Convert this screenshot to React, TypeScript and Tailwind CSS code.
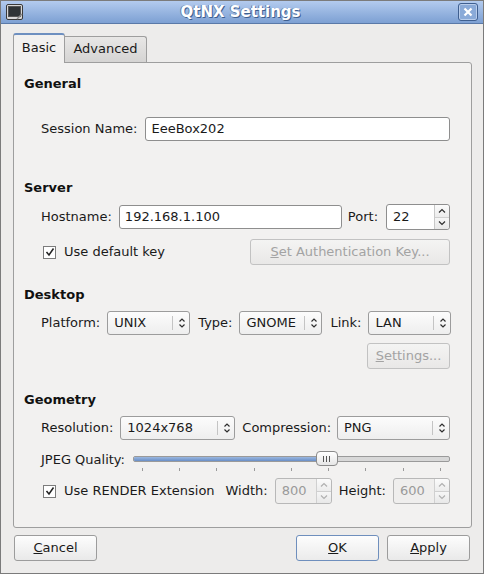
import type { ReactNode } from "react";

// Small up/down chevron used in combo boxes
function UpDown() {
  return (
    <svg width="8" height="12" viewBox="0 0 8 12" className="text-[#2e2e2e]">
      <path d="M1.5 4.5 L4 2 L6.5 4.5" fill="none" stroke="currentColor" strokeWidth="1.2" />
      <path d="M1.5 7.5 L4 10 L6.5 7.5" fill="none" stroke="currentColor" strokeWidth="1.2" />
    </svg>
  );
}

function Combo({ value, width }: { value: string; width: string }) {
  return (
    <div
      className={`${width} h-[24px] flex items-stretch rounded-[3px] border border-[#9c9c9c] bg-gradient-to-b from-[#fcfcfc] to-[#eeeeee] shrink-0`}
    >
      <div className="flex-1 flex items-center pl-[6px] text-[#1a1a1a]">{value}</div>
      <div className="w-[20px] flex items-center justify-center">
        <div className="w-px h-[14px] bg-[#c4c4c4] mr-[5px]" />
        <UpDown />
      </div>
    </div>
  );
}

function SpinBox({ value, width, disabled }: { value: string; width: string; disabled?: boolean }) {
  const stroke = disabled ? "#b0b0b0" : "#2e2e2e";
  return (
    <div
      className={`${width} h-[26px] flex items-stretch rounded-[3px] border ${
        disabled ? "border-[#b8b8b8] bg-[#efeeed] text-[#9a9a9a]" : "border-[#8e8e8e] bg-white text-[#1a1a1a]"
      } shrink-0`}
    >
      <div className="flex-1 flex items-center pl-[6px]">{value}</div>
      <div className={`w-[15px] flex flex-col border-l ${disabled ? "border-[#d0d0d0]" : "border-[#c8c8c8]"}`}>
        <div className="flex-1 flex items-center justify-center border-b border-[#d0d0d0] bg-gradient-to-b from-[#fbfbfb] to-[#ececec] rounded-tr-[3px]">
          <svg width="8" height="6" viewBox="0 0 8 6">
            <path d="M1 4.5 L4 1.5 L7 4.5" fill="none" stroke={stroke} strokeWidth="1.2" />
          </svg>
        </div>
        <div className="flex-1 flex items-center justify-center bg-gradient-to-b from-[#f6f6f6] to-[#e8e8e8] rounded-br-[3px]">
          <svg width="8" height="6" viewBox="0 0 8 6">
            <path d="M1 1.5 L4 4.5 L7 1.5" fill="none" stroke={stroke} strokeWidth="1.2" />
          </svg>
        </div>
      </div>
    </div>
  );
}

function Input({ value, className }: { value: string; className?: string }) {
  return (
    <div
      className={`h-[24px] flex items-center pl-[5px] rounded-[3px] border border-[#8e8e8e] bg-white text-[#1a1a1a] ${className ?? ""}`}
    >
      {value}
    </div>
  );
}

function Button({
  children,
  width,
  disabled,
  isDefault,
}: {
  children: ReactNode;
  width: string;
  disabled?: boolean;
  isDefault?: boolean;
}) {
  return (
    <div
      className={`${width} h-[26px] flex items-center justify-center rounded-[3px] border shrink-0 ${
        disabled
          ? "border-[#c2c2c2] bg-gradient-to-b from-[#f4f4f3] to-[#e9e8e7] text-[#a3a3a3]"
          : isDefault
          ? "border-[#6f8fbd] bg-gradient-to-b from-[#fdfdfd] to-[#ebebeb] text-[#1a1a1a]"
          : "border-[#9c9c9c] bg-gradient-to-b from-[#fdfdfd] to-[#e9e9e9] text-[#1a1a1a]"
      }`}
    >
      {children}
    </div>
  );
}

function Check({ label }: { label: string }) {
  return (
    <div className="flex items-center gap-[8px] pl-[2px]">
      <div className="w-[13px] h-[13px] border border-[#7c7c7c] bg-white flex items-center justify-center">
        <svg width="10" height="10" viewBox="0 0 10 10">
          <path d="M1.5 5 L4 8 L8.5 1.5" fill="none" stroke="#222" strokeWidth="1.5" />
        </svg>
      </div>
      <span className="text-[#1a1a1a]">{label}</span>
    </div>
  );
}

function Heading({ children, className }: { children: ReactNode; className?: string }) {
  return <div className={`font-bold text-[#111] leading-[16px] ${className ?? ""}`}>{children}</div>;
}

function Slider() {
  const ticks = [0, 1, 2, 3, 4, 5, 6, 7, 8];
  return (
    <div className="flex-1 relative h-[26px]">
      <div className="absolute left-0 right-0 top-[9px] h-[6px] rounded-[2px] border border-[#9a9a9a] bg-[#d8d8d8] overflow-hidden">
        <div className="h-full w-[59%] bg-gradient-to-b from-[#9ab7e0] to-[#6a8fc7]" />
      </div>
      <div className="absolute left-[183px] top-[4px] w-[22px] h-[15px] rounded-[4px] border border-[#8a8a8a] bg-gradient-to-b from-[#ffffff] to-[#e6e6e6] flex items-center justify-center gap-[2px]">
        <div className="w-px h-[6px] bg-[#555]" />
        <div className="w-px h-[6px] bg-[#555]" />
        <div className="w-px h-[6px] bg-[#555]" />
      </div>
      <div className="absolute left-[9px] right-[9px] top-[21px] flex justify-between">
        {ticks.map((t) => (
          <div key={t} className="w-px h-[3px] bg-[#9a9a9a]" />
        ))}
      </div>
    </div>
  );
}

export default function App() {
  return (
    <div
      className="w-[484px] h-[574px] flex flex-col bg-[#edeceb] border border-[#7b7b7b] text-[13px] overflow-hidden"
      style={{ fontFamily: '"DejaVu Sans", "Liberation Sans", sans-serif' }}
    >
      {/* Title bar */}
      <div className="h-[23px] shrink-0 flex items-center bg-gradient-to-b from-[#b3cbee] to-[#7da0d3] border-b border-[#5a79a8] px-[5px]">
        <svg width="17" height="16" viewBox="0 0 17 16">
          <rect x="0.5" y="0.5" width="16" height="15" rx="1.5" fill="#d8d8d8" stroke="#3a3a3a" />
          <rect x="2.5" y="2.5" width="12" height="10" fill="#2f3437" stroke="#555" />
          <path d="M11 15 L16 10" stroke="#888" strokeWidth="1.5" />
        </svg>
        <div
          className="flex-1 text-center text-white font-bold text-[15px]"
          style={{ textShadow: "1px 1px 0 #3f5f8f, -1px 0 0 #5f80b0" }}
        >
          QtNX Settings
        </div>
        <div className="w-[20px] h-[18px] rounded-[3px] border border-[#3f5f90] flex items-center justify-center bg-[#8aaad8] shadow-[inset_0_0_0_1px_#b9cdeb]">
          <svg width="10" height="10" viewBox="0 0 10 10">
            <path d="M1.5 1.5 L8.5 8.5 M8.5 1.5 L1.5 8.5" stroke="white" strokeWidth="2.2" />
          </svg>
        </div>
      </div>

      {/* Tabs */}
      <div className="mt-[9px] ml-[12px] flex items-end h-[29px] shrink-0">
        <div className="relative z-10 w-[52px] h-[30px] -mb-px rounded-t-[3px] border border-b-0 border-[#9e9e9e] border-t-[#6d8fc0] border-t-2 bg-[#f2f1f0] flex items-center justify-center text-[#1a1a1a] pb-[2px]">
          Basic
        </div>
        <div className="w-[82px] h-[26px] rounded-tr-[3px] border border-l-0 border-b-0 border-[#9e9e9e] bg-gradient-to-b from-[#e8e7e6] to-[#d5d4d3] flex items-center justify-center text-[#1a1a1a] pb-[2px]">
          Advanced
        </div>
      </div>

      {/* Tab page */}
      <div className="ml-[12px] w-[459px] h-[466px] shrink-0 rounded-b-[3px] rounded-tr-[3px] border border-[#9e9e9e] bg-[#f2f1f0] pl-[10px] pr-[21px] pt-[13px]">
        <Heading>General</Heading>

        <div className="mt-[25px] flex items-center gap-[8px] pl-[17px]">
          <span className="text-[#1a1a1a] whitespace-nowrap">Session Name:</span>
          <Input value="EeeBox202" className="flex-1" />
        </div>

        <Heading className="mt-[39px]">Server</Heading>
        <div className="mt-[8px] flex items-center pl-[17px]">
          <span className="text-[#1a1a1a]">Hostname:</span>
          <Input value="192.168.1.100" className="ml-[7px] w-[223px]" />
          <span className="ml-[6px] text-[#1a1a1a]">Port:</span>
          <div className="ml-auto">
            <SpinBox value="22" width="w-[64px]" />
          </div>
        </div>
        <div className="mt-[9px] flex items-center pl-[17px]">
          <Check label="Use default key" />
          <div className="ml-auto">
            <Button width="w-[200px]" disabled>
              <span>
                <span className="underline">S</span>et Authentication Key...
              </span>
            </Button>
          </div>
        </div>

        <Heading className="mt-[22px]">Desktop</Heading>
        <div className="mt-[8px] flex items-center gap-[7px] pl-[17px]">
          <span className="text-[#1a1a1a]">Platform:</span>
          <Combo value="UNIX" width="w-[83px]" />
          <span className="ml-[1px] text-[#1a1a1a]">Type:</span>
          <Combo value="GNOME" width="w-[83px]" />
          <span className="ml-[1px] text-[#1a1a1a]">Link:</span>
          <div className="ml-auto">
            <Combo value="LAN" width="w-[83px]" />
          </div>
        </div>
        <div className="mt-[8px] flex justify-end">
          <Button width="w-[83px]" disabled>
            <span>
              <span className="underline">S</span>ettings...
            </span>
          </Button>
        </div>

        <Heading className="mt-[23px]">Geometry</Heading>
        <div className="mt-[8px] flex items-center pl-[17px]">
          <span className="text-[#1a1a1a]">Resolution:</span>
          <div className="ml-[7px]">
            <Combo value="1024x768" width="w-[115px]" />
          </div>
          <span className="ml-[7px] text-[#1a1a1a]">Compression:</span>
          <div className="ml-auto">
            <Combo value="PNG" width="w-[113px]" />
          </div>
        </div>
        <div className="mt-[7px] flex items-center gap-[8px] pl-[17px]">
          <span className="text-[#1a1a1a] whitespace-nowrap">JPEG Quality:</span>
          <Slider />
        </div>
        <div className="mt-[5px] flex items-center pl-[17px]">
          <Check label="Use RENDER Extension" />
          <span className="ml-auto text-[#1a1a1a]">Width:</span>
          <div className="ml-[7px]">
            <SpinBox value="800" width="w-[57px]" disabled />
          </div>
          <span className="ml-[7px] text-[#1a1a1a]">Height:</span>
          <div className="ml-[7px]">
            <SpinBox value="600" width="w-[57px]" disabled />
          </div>
        </div>
      </div>

      {/* Dialog buttons */}
      <div className="mt-[7px] flex items-center pl-[13px] pr-[13px]">
        <Button width="w-[83px]">
          <span>
            <span className="underline">C</span>ancel
          </span>
        </Button>
        <div className="ml-auto flex gap-[8px]">
          <Button width="w-[83px]" isDefault>
            <span>
              <span className="underline">O</span>K
            </span>
          </Button>
          <Button width="w-[83px]">
            <span>
              <span className="underline">A</span>pply
            </span>
          </Button>
        </div>
      </div>
    </div>
  );
}
